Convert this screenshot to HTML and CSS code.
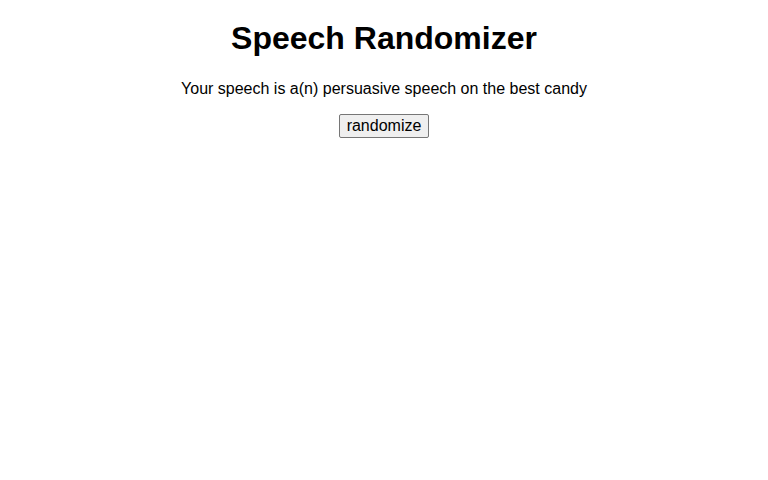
FILE: index.html
```html
<!DOCTYPE html>
<html lang="en">
<head>
<meta charset="utf-8">
<title>Speech Randomizer</title>
<link rel="stylesheet" href="styles.css">
</head>
<body>
<main class="app">
  <h1 class="title">Speech Randomizer</h1>
  <p class="result">Your speech is a(n) persuasive speech on the best candy</p>
  <p class="actions"><button class="randomize" type="button">randomize</button></p>
</main>
</body>
</html>
```

FILE: styles.css
```css
body {
  margin: 0;
  font-family: "Liberation Sans", Arial, sans-serif;
  color: #000;
  background: #fff;
}

.app {
  text-align: center;
  padding: 0 8px;
}

.title {
  font-size: 32px;
  font-weight: bold;
  margin: 20px 0 23px;
}

.result {
  font-size: 16px;
  margin: 16px 0;
}

.actions {
  margin: 16px 0;
}

.randomize {
  font-family: "Liberation Sans", Arial, sans-serif;
  font-size: 16px;
  color: #000;
  background: #efefef;
  border: 1px solid #767676;
  border-radius: 2px;
  padding: 2px 7px;
}
```
